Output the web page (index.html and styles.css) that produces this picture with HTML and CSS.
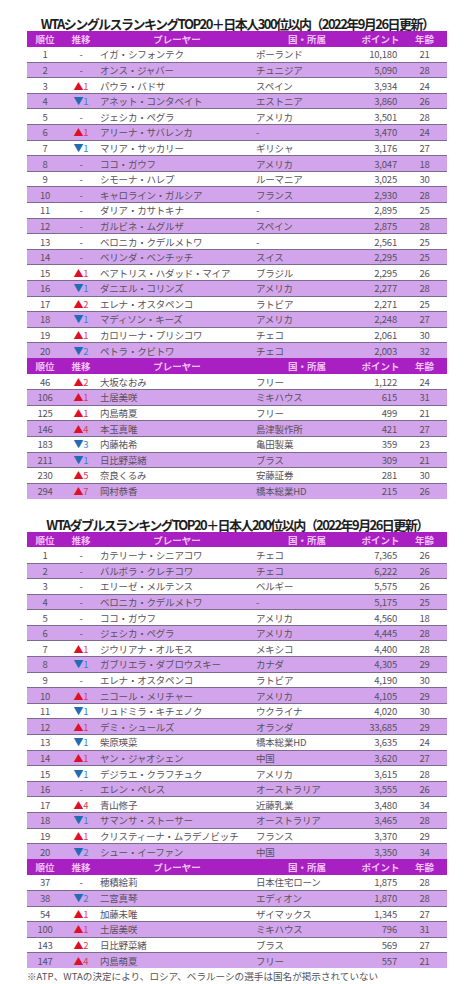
FILE: index.html
```html
<!DOCTYPE html>
<html lang="ja">
<head>
<meta charset="utf-8">
<link rel="stylesheet" href="styles.css">
</head>
<body>
<div class="page">
  <h2 class="title">WTAシングルスランキングTOP20＋日本人300位以内（2022年9月26日更新）</h2>
  <table class="rank">
    <colgroup><col class="c1"><col class="c2"><col class="c3"><col class="c4"><col class="c5"><col class="c6"></colgroup>
    <tbody>
      <tr class="hd"><td>順位</td><td>推移</td><td>プレーヤー</td><td>国・所属</td><td>ポイント</td><td>年齢</td></tr>
      <tr><td>1</td><td>-</td><td class="nm">イガ・シフォンテク</td><td class="ct">ポーランド</td><td class="pt">10,180</td><td>21</td></tr>
      <tr class="alt"><td>2</td><td>-</td><td class="nm">オンス・ジャバー</td><td class="ct">チュニジア</td><td class="pt">5,090</td><td>28</td></tr>
      <tr><td>3</td><td><span class="up">▲<i>1</i></span></td><td class="nm">パウラ・バドサ</td><td class="ct">スペイン</td><td class="pt">3,934</td><td>24</td></tr>
      <tr class="alt"><td>4</td><td><span class="dn">▼<i>1</i></span></td><td class="nm">アネット・コンタベイト</td><td class="ct">エストニア</td><td class="pt">3,860</td><td>26</td></tr>
      <tr><td>5</td><td>-</td><td class="nm">ジェシカ・ペグラ</td><td class="ct">アメリカ</td><td class="pt">3,501</td><td>28</td></tr>
      <tr class="alt"><td>6</td><td><span class="up">▲<i>1</i></span></td><td class="nm">アリーナ・サバレンカ</td><td class="ct">-</td><td class="pt">3,470</td><td>24</td></tr>
      <tr><td>7</td><td><span class="dn">▼<i>1</i></span></td><td class="nm">マリア・サッカリー</td><td class="ct">ギリシャ</td><td class="pt">3,176</td><td>27</td></tr>
      <tr class="alt"><td>8</td><td>-</td><td class="nm">ココ・ガウフ</td><td class="ct">アメリカ</td><td class="pt">3,047</td><td>18</td></tr>
      <tr><td>9</td><td>-</td><td class="nm">シモーナ・ハレプ</td><td class="ct">ルーマニア</td><td class="pt">3,025</td><td>30</td></tr>
      <tr class="alt"><td>10</td><td>-</td><td class="nm">キャロライン・ガルシア</td><td class="ct">フランス</td><td class="pt">2,930</td><td>28</td></tr>
      <tr><td>11</td><td>-</td><td class="nm">ダリア・カサトキナ</td><td class="ct">-</td><td class="pt">2,895</td><td>25</td></tr>
      <tr class="alt"><td>12</td><td>-</td><td class="nm">ガルビネ・ムグルザ</td><td class="ct">スペイン</td><td class="pt">2,875</td><td>28</td></tr>
      <tr><td>13</td><td>-</td><td class="nm">ベロニカ・クデルメトワ</td><td class="ct">-</td><td class="pt">2,561</td><td>25</td></tr>
      <tr class="alt"><td>14</td><td>-</td><td class="nm">ベリンダ・ベンチッチ</td><td class="ct">スイス</td><td class="pt">2,295</td><td>25</td></tr>
      <tr><td>15</td><td><span class="up">▲<i>1</i></span></td><td class="nm">ベアトリス・ハダッド・マイア</td><td class="ct">ブラジル</td><td class="pt">2,295</td><td>26</td></tr>
      <tr class="alt"><td>16</td><td><span class="dn">▼<i>1</i></span></td><td class="nm">ダニエル・コリンズ</td><td class="ct">アメリカ</td><td class="pt">2,277</td><td>28</td></tr>
      <tr><td>17</td><td><span class="up">▲<i>2</i></span></td><td class="nm">エレナ・オスタペンコ</td><td class="ct">ラトビア</td><td class="pt">2,271</td><td>25</td></tr>
      <tr class="alt"><td>18</td><td><span class="dn">▼<i>1</i></span></td><td class="nm">マディソン・キーズ</td><td class="ct">アメリカ</td><td class="pt">2,248</td><td>27</td></tr>
      <tr><td>19</td><td><span class="up">▲<i>1</i></span></td><td class="nm">カロリーナ・プリシコワ</td><td class="ct">チェコ</td><td class="pt">2,061</td><td>30</td></tr>
      <tr class="alt"><td>20</td><td><span class="dn">▼<i>2</i></span></td><td class="nm">ペトラ・クビトワ</td><td class="ct">チェコ</td><td class="pt">2,003</td><td>32</td></tr>
      <tr class="hd"><td>順位</td><td>推移</td><td>プレーヤー</td><td>国・所属</td><td>ポイント</td><td>年齢</td></tr>
      <tr><td>46</td><td><span class="up">▲<i>2</i></span></td><td class="nm">大坂なおみ</td><td class="ct">フリー</td><td class="pt">1,122</td><td>24</td></tr>
      <tr class="alt"><td>106</td><td><span class="up">▲<i>1</i></span></td><td class="nm">土居美咲</td><td class="ct">ミキハウス</td><td class="pt">615</td><td>31</td></tr>
      <tr><td>125</td><td><span class="up">▲<i>1</i></span></td><td class="nm">内島萌夏</td><td class="ct">フリー</td><td class="pt">499</td><td>21</td></tr>
      <tr class="alt"><td>146</td><td><span class="up">▲<i>4</i></span></td><td class="nm">本玉真唯</td><td class="ct">島津製作所</td><td class="pt">421</td><td>27</td></tr>
      <tr><td>183</td><td><span class="dn">▼<i>3</i></span></td><td class="nm">内藤祐希</td><td class="ct">亀田製菓</td><td class="pt">359</td><td>23</td></tr>
      <tr class="alt"><td>211</td><td><span class="dn">▼<i>1</i></span></td><td class="nm">日比野菜緒</td><td class="ct">ブラス</td><td class="pt">309</td><td>21</td></tr>
      <tr><td>230</td><td><span class="up">▲<i>5</i></span></td><td class="nm">奈良くるみ</td><td class="ct">安藤証券</td><td class="pt">281</td><td>30</td></tr>
      <tr class="alt"><td>294</td><td><span class="up">▲<i>7</i></span></td><td class="nm">岡村恭香</td><td class="ct">橋本総業HD</td><td class="pt">215</td><td>26</td></tr>
    </tbody>
  </table>

  <h2 class="title title2">WTAダブルスランキングTOP20＋日本人200位以内（2022年9月26日更新）</h2>
  <table class="rank">
    <colgroup><col class="c1"><col class="c2"><col class="c3"><col class="c4"><col class="c5"><col class="c6"></colgroup>
    <tbody>
      <tr class="hd"><td>順位</td><td>推移</td><td>プレーヤー</td><td>国・所属</td><td>ポイント</td><td>年齢</td></tr>
      <tr><td>1</td><td>-</td><td class="nm">カテリーナ・シニアコワ</td><td class="ct">チェコ</td><td class="pt">7,365</td><td>26</td></tr>
      <tr class="alt"><td>2</td><td>-</td><td class="nm">バルボラ・クレチコワ</td><td class="ct">チェコ</td><td class="pt">6,222</td><td>26</td></tr>
      <tr><td>3</td><td>-</td><td class="nm">エリーゼ・メルテンス</td><td class="ct">ベルギー</td><td class="pt">5,575</td><td>26</td></tr>
      <tr class="alt"><td>4</td><td>-</td><td class="nm">ベロニカ・クデルメトワ</td><td class="ct">-</td><td class="pt">5,175</td><td>25</td></tr>
      <tr><td>5</td><td>-</td><td class="nm">ココ・ガウフ</td><td class="ct">アメリカ</td><td class="pt">4,560</td><td>18</td></tr>
      <tr class="alt"><td>6</td><td>-</td><td class="nm">ジェシカ・ペグラ</td><td class="ct">アメリカ</td><td class="pt">4,445</td><td>28</td></tr>
      <tr><td>7</td><td><span class="up">▲<i>1</i></span></td><td class="nm">ジウリアナ・オルモス</td><td class="ct">メキシコ</td><td class="pt">4,400</td><td>28</td></tr>
      <tr class="alt"><td>8</td><td><span class="dn">▼<i>1</i></span></td><td class="nm">ガブリエラ・ダブロウスキー</td><td class="ct">カナダ</td><td class="pt">4,305</td><td>29</td></tr>
      <tr><td>9</td><td>-</td><td class="nm">エレナ・オスタペンコ</td><td class="ct">ラトビア</td><td class="pt">4,190</td><td>30</td></tr>
      <tr class="alt"><td>10</td><td><span class="up">▲<i>1</i></span></td><td class="nm">ニコール・メリチャー</td><td class="ct">アメリカ</td><td class="pt">4,105</td><td>29</td></tr>
      <tr><td>11</td><td><span class="dn">▼<i>1</i></span></td><td class="nm">リュドミラ・キチェノク</td><td class="ct">ウクライナ</td><td class="pt">4,020</td><td>30</td></tr>
      <tr class="alt"><td>12</td><td><span class="up">▲<i>1</i></span></td><td class="nm">デミ・シュールズ</td><td class="ct">オランダ</td><td class="pt">33,685</td><td>29</td></tr>
      <tr><td>13</td><td><span class="dn">▼<i>1</i></span></td><td class="nm">柴原瑛菜</td><td class="ct">橋本総業HD</td><td class="pt">3,635</td><td>24</td></tr>
      <tr class="alt"><td>14</td><td><span class="up">▲<i>1</i></span></td><td class="nm">ヤン・ジャオシェン</td><td class="ct">中国</td><td class="pt">3,620</td><td>27</td></tr>
      <tr><td>15</td><td><span class="dn">▼<i>1</i></span></td><td class="nm">デジラエ・クラフチュク</td><td class="ct">アメリカ</td><td class="pt">3,615</td><td>28</td></tr>
      <tr class="alt"><td>16</td><td>-</td><td class="nm">エレン・ペレス</td><td class="ct">オーストラリア</td><td class="pt">3,555</td><td>26</td></tr>
      <tr><td>17</td><td><span class="up">▲<i>4</i></span></td><td class="nm">青山修子</td><td class="ct">近藤乳業</td><td class="pt">3,480</td><td>34</td></tr>
      <tr class="alt"><td>18</td><td><span class="dn">▼<i>1</i></span></td><td class="nm">サマンサ・ストーサー</td><td class="ct">オーストラリア</td><td class="pt">3,465</td><td>28</td></tr>
      <tr><td>19</td><td><span class="up">▲<i>1</i></span></td><td class="nm">クリスティーナ・ムラデノビッチ</td><td class="ct">フランス</td><td class="pt">3,370</td><td>29</td></tr>
      <tr class="alt"><td>20</td><td><span class="dn">▼<i>2</i></span></td><td class="nm">シュー・イーファン</td><td class="ct">中国</td><td class="pt">3,350</td><td>34</td></tr>
      <tr class="hd"><td>順位</td><td>推移</td><td>プレーヤー</td><td>国・所属</td><td>ポイント</td><td>年齢</td></tr>
      <tr><td>37</td><td>-</td><td class="nm">穂積絵莉</td><td class="ct">日本住宅ローン</td><td class="pt">1,875</td><td>28</td></tr>
      <tr class="alt"><td>38</td><td><span class="dn">▼<i>2</i></span></td><td class="nm">二宮真琴</td><td class="ct">エディオン</td><td class="pt">1,870</td><td>28</td></tr>
      <tr><td>54</td><td><span class="up">▲<i>1</i></span></td><td class="nm">加藤未唯</td><td class="ct">ザイマックス</td><td class="pt">1,345</td><td>27</td></tr>
      <tr class="alt"><td>100</td><td><span class="up">▲<i>1</i></span></td><td class="nm">土居美咲</td><td class="ct">ミキハウス</td><td class="pt">796</td><td>31</td></tr>
      <tr><td>143</td><td><span class="up">▲<i>2</i></span></td><td class="nm">日比野菜緒</td><td class="ct">ブラス</td><td class="pt">569</td><td>27</td></tr>
      <tr class="alt"><td>147</td><td><span class="up">▲<i>4</i></span></td><td class="nm">内島萌夏</td><td class="ct">フリー</td><td class="pt">557</td><td>21</td></tr>
    </tbody>
  </table>
  <p class="note">※ATP、WTAの決定により、ロシア、ベラルーシの選手は国名が掲示されていない</p>
</div>
</body>
</html>
```

FILE: styles.css
```css
html, body {
  margin: 0;
  padding: 0;
  background: #ffffff;
}
body {
  font-family: "Noto Sans CJK JP", "Noto Sans", sans-serif;
  color: #57525c;
}
.page {
  width: 420px;
  margin-left: 27px;
  padding-top: 17px;
}
.title {
  margin: 0;
  height: 14px;
  line-height: 14px;
  font-size: 13px;
  font-weight: 700;
  color: #1e1e1e;
  text-align: center;
  letter-spacing: -1.55px;
  white-space: nowrap;
}
.title2 {
  margin-top: 19px;
}
.rank {
  width: 420px;
  table-layout: fixed;
  border-collapse: collapse;
  font-size: 9.5px;
}
.c1 { width: 36px; }
.c2 { width: 36px; }
.c3 { width: 156px; }
.c4 { width: 104px; }
.c5 { width: 43px; }
.c6 { width: 45px; }
.rank tr {
  height: 15.6px;
}
.rank td {
  padding: 0;
  text-align: center;
  white-space: nowrap;
  line-height: 14px;
  border-top: 1.5px solid #7a6c8a;
  letter-spacing: -0.2px;
}
.rank tr.hd td {
  background: #a81fc2;
  color: #f2c4f7;
  font-weight: 700;
  border-top: none;
  letter-spacing: 0;
}
.rank tr.hd + tr td {
  border-top: none;
}
.rank tr.alt td {
  background: #d2a4ec;
}
.rank td.nm, .rank td.ct {
  text-align: left;
  padding-left: 1px;
}
.rank tr.hd td.nm, .rank tr.hd td.ct {
  text-align: center;
  padding-left: 0;
}
.rank td.pt {
  text-align: right;
  padding-right: 5px;
}
.rank tr.hd td.pt {
  text-align: center;
  padding-right: 0;
}
.up {
  color: #dd1028;
  font-size: 10px;
}
.dn {
  color: #1f6db5;
  font-size: 10px;
}
.up i, .dn i {
  font-style: normal;
  font-size: 9.5px;
}
.up i { color: #d8404e; }
.dn i { color: #3c82c4; }
.note {
  margin: 2px 0 0 0;
  font-size: 9.6px;
  line-height: 12px;
  color: #57525c;
  white-space: nowrap;
}
```
